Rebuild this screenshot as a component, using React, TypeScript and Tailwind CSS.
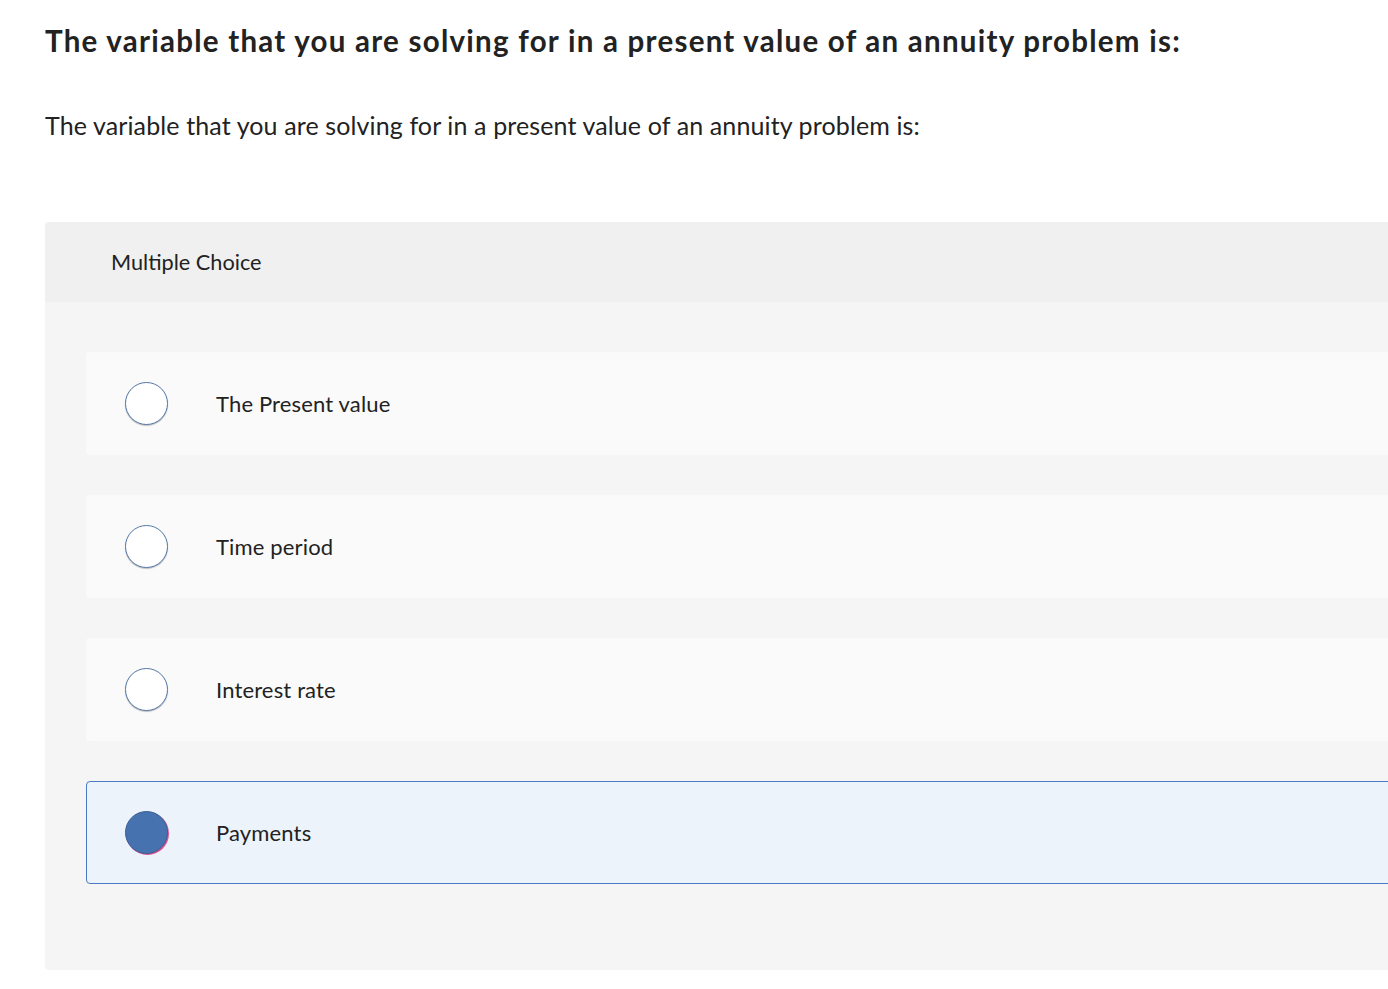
import React from "react";

const options = [
  { label: "The Present value", selected: false },
  { label: "Time period", selected: false },
  { label: "Interest rate", selected: false },
  { label: "Payments", selected: true },
];

function Radio({ selected }: { selected: boolean }) {
  if (selected) {
    return (
      <span className="block h-[43px] w-[43px] shrink-0 rounded-full border border-[#3b5f94] bg-[#4672b0] shadow-[1px_1px_0_0_#e0508f]" />
    );
  }
  return (
    <span className="block h-[43px] w-[43px] shrink-0 rounded-full border-[1.5px] border-[#5578a8] bg-white shadow-[0_1px_1px_rgba(0,0,0,0.25)]" />
  );
}

export default function App() {
  return (
    <div
      className="min-h-[989px] w-[1388px] overflow-hidden bg-white text-[#222]"
      style={{ fontFamily: "Lato, 'Open Sans', Arial, sans-serif" }}
    >
      <div className="pl-[45px] pt-[23px]">
        <h1 className="whitespace-nowrap text-[29.5px] font-bold leading-[36px] tracking-[1.25px] text-[#222]">
          The variable that you are solving for in a present value of an annuity problem is:
        </h1>
        <p className="mt-[51px] whitespace-nowrap text-[25px] leading-[30px] tracking-[0.12px] text-[#222]">
          The variable that you are solving for in a present value of an annuity problem is:
        </p>
        <div className="mt-[82px] w-[1420px] overflow-hidden rounded-[4px] bg-[#f5f5f5]">
          <div className="flex h-[80px] items-center bg-[#f0f0f0] pl-[66px] text-[21.7px] text-[#222]">
            Multiple Choice
          </div>
          <div className="flex flex-col gap-[40px] pb-[86px] pl-[41px] pr-[0px] pt-[50px]">
            {options.map((o) => (
              <div
                key={o.label}
                className={
                  o.selected
                    ? "flex h-[103px] items-center rounded-[4px] border border-[#4a7bc4] bg-[#ecf3fb] pl-[38px]"
                    : "flex h-[103px] items-center rounded-[4px] bg-[#fafafa] pl-[39px]"
                }
              >
                <Radio selected={o.selected} />
                <span className="ml-[48px] text-[22px] tracking-[0.15px] text-[#222]">{o.label}</span>
              </div>
            ))}
          </div>
        </div>
      </div>
    </div>
  );
}
